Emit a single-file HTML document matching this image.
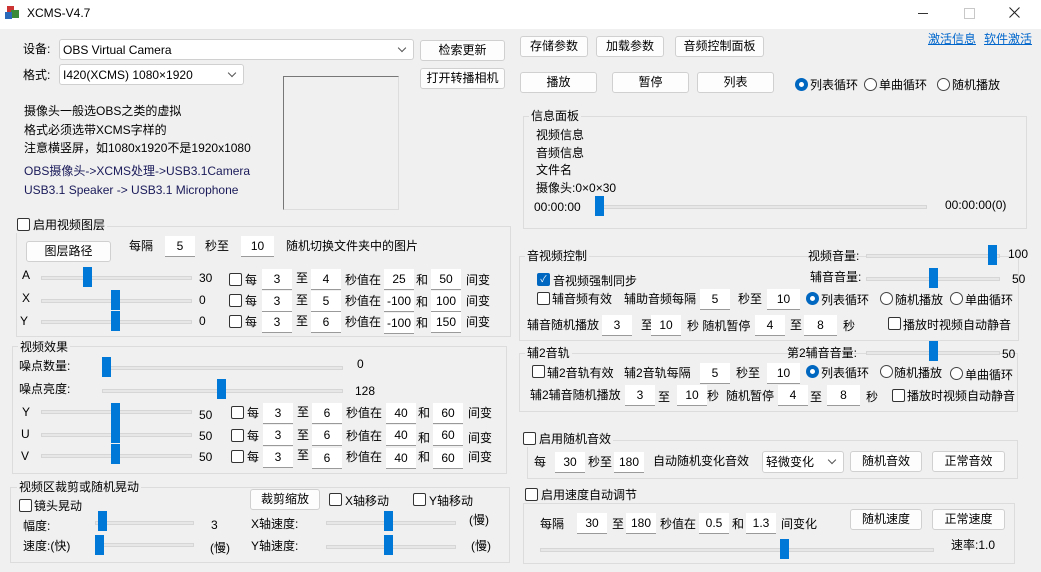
<!DOCTYPE html><html><head><meta charset="utf-8"><style>
body{margin:0;width:1041px;height:572px;background:#f0f0f0;font-family:"Liberation Sans","Noto Sans CJK SC",sans-serif;font-size:12px;color:#000;position:relative;overflow:hidden}
.t{position:absolute;line-height:16px;white-space:nowrap}
.i{position:absolute;background:#fff;border-bottom:1px solid #9a9a9a;height:20px;line-height:21px;text-align:center;width:30px}
.b{position:absolute;background:#fdfdfd;border:1px solid #d0d0d0;border-radius:3px;text-align:center;line-height:19px;height:19px;box-sizing:content-box}
.c{position:absolute;width:11px;height:11px;border:1px solid #333;border-radius:2px;background:#fff}
.r{position:absolute;width:11px;height:11px;border:1px solid #444;border-radius:50%;background:#fff}
.r.on{border:4px solid #0067c0;width:5px;height:5px;background:#fff}
.tr{position:absolute;height:2px;background:#e7e7e7;border:1px solid #d6d6d6}
.th{position:absolute;width:9px;height:20px;background:#0078d7}
.g{position:absolute;border:1px solid #dcdcdc}
.gl{position:absolute;background:#f0f0f0;line-height:16px;padding:0 2px;white-space:nowrap}
.cb{position:absolute;background:#fff;border:1px solid #d0d0d0;border-radius:3px;height:20px;line-height:20px;padding-left:3px;box-sizing:border-box}
.cb:after{content:"";position:absolute;right:8px;top:5px;width:5px;height:5px;border-right:1px solid #555;border-bottom:1px solid #555;transform:rotate(45deg)}
a{color:#0066cc;text-decoration:underline}
</style></head><body>
<div style="position:absolute;left:0;top:0;width:1041px;height:29px;background:#fff"></div>
<div style="position:absolute;left:7px;top:6px;width:7px;height:7px;background:#c33"></div>
<div style="position:absolute;left:11px;top:10px;width:8px;height:8px;background:#3a8a3a"></div>
<div style="position:absolute;left:5px;top:12px;width:7px;height:7px;background:#2a6ab8"></div>
<div class="t" style="left:27px;top:5px;font-size:12px">XCMS-V4.7</div>
<div style="position:absolute;left:918px;top:13px;width:10px;height:1px;background:#333"></div>
<div style="position:absolute;left:964px;top:8px;width:9px;height:9px;border:1px solid #c8c8c8"></div>
<svg style="position:absolute;left:1009px;top:7px" width="11" height="11"><path d="M0.5 0.5L10.5 10.5M10.5 0.5L0.5 10.5" stroke="#222" stroke-width="1"/></svg>

<div class="t" style="left:23px;top:41px">设备:</div>
<div class="cb" style="left:59px;top:39px;width:355px;height:21px">OBS Virtual Camera</div>
<div class="b" style="left:420px;top:40px;width:83px">检索更新</div>
<div class="t" style="left:23px;top:67px">格式:</div>
<div class="cb" style="left:59px;top:64px;width:185px;height:21px">I420(XCMS) 1080×1920</div>
<div class="b" style="left:420px;top:68px;width:83px">打开转播相机</div>
<div style="position:absolute;left:283px;top:76px;width:114px;height:132px;border:1px solid #ddd;border-top-color:#777;border-left-color:#777"></div>
<div class="t" style="left:24px;top:103px">摄像头一般选OBS之类的虚拟</div>
<div class="t" style="left:24px;top:122px">格式必须选带XCMS字样的</div>
<div class="t" style="left:24px;top:140px">注意横竖屏，如1080x1920不是1920x1080</div>
<div class="t" style="left:24px;top:163px;color:#1a1a5a">OBS摄像头-&gt;XCMS处理-&gt;USB3.1Camera</div>
<div class="t" style="left:24px;top:182px;color:#1a1a5a">USB3.1 Speaker -&gt; USB3.1 Microphone</div>

<div class="g" style="left:16px;top:226px;width:493px;height:109px"></div>
<div class="gl" style="left:15px;top:217px"><span class="c" style="position:relative;display:inline-block;vertical-align:-2px;margin-right:3px"></span>启用视频图层</div>
<div class="b" style="left:26px;top:241px;width:83px">图层路径</div>
<div class="t" style="left:129px;top:238px">每隔</div>
<div class="i" style="left:165px;top:236px">5</div>
<div class="t" style="left:205px;top:238px">秒至</div>
<div class="i" style="left:241px;top:236px;width:33px">10</div>
<div class="t" style="left:286px;top:238px">随机切换文件夹中的图片</div>

<div class="t" style="left:22px;top:267px">A</div>
<div class="tr" style="left:41px;top:276px;width:149px"></div><div class="th" style="left:83px;top:267px"></div>
<div class="t" style="left:199px;top:270px">30</div>
<div class="c" style="left:229px;top:273px"></div><div class="t" style="left:245px;top:272px">每</div>
<div class="i" style="left:262px;top:269px">3</div><div class="t" style="left:296px;top:270px">至</div>
<div class="i" style="left:311px;top:269px">4</div><div class="t" style="left:345px;top:272px">秒值在</div>
<div class="i" style="left:384px;top:269px">25</div><div class="t" style="left:416px;top:272px">和</div>
<div class="i" style="left:431px;top:269px">50</div><div class="t" style="left:466px;top:272px">间变</div>

<div class="t" style="left:22px;top:290px">X</div>
<div class="tr" style="left:41px;top:299px;width:149px"></div><div class="th" style="left:111px;top:290px"></div>
<div class="t" style="left:199px;top:292px">0</div>
<div class="c" style="left:229px;top:294px"></div><div class="t" style="left:245px;top:293px">每</div>
<div class="i" style="left:262px;top:291px">3</div><div class="t" style="left:296px;top:292px">至</div>
<div class="i" style="left:311px;top:291px">5</div><div class="t" style="left:345px;top:293px">秒值在</div>
<div class="i" style="left:384px;top:291px">-100</div><div class="t" style="left:416px;top:294px">和</div>
<div class="i" style="left:431px;top:291px">100</div><div class="t" style="left:466px;top:293px">间变</div>

<div class="t" style="left:20px;top:313px">Y</div>
<div class="tr" style="left:41px;top:320px;width:149px"></div><div class="th" style="left:111px;top:311px"></div>
<div class="t" style="left:199px;top:313px">0</div>
<div class="c" style="left:229px;top:315px"></div><div class="t" style="left:245px;top:314px">每</div>
<div class="i" style="left:262px;top:312px">3</div><div class="t" style="left:296px;top:313px">至</div>
<div class="i" style="left:311px;top:312px">6</div><div class="t" style="left:345px;top:314px">秒值在</div>
<div class="i" style="left:384px;top:313px">-100</div><div class="t" style="left:416px;top:315px">和</div>
<div class="i" style="left:431px;top:312px">150</div><div class="t" style="left:466px;top:314px">间变</div>

<div class="g" style="left:12px;top:346px;width:493px;height:126px"></div>
<div class="gl" style="left:18px;top:339px">视频效果</div>
<div class="t" style="left:19px;top:358px">噪点数量:</div>
<div class="tr" style="left:102px;top:366px;width:239px"></div><div class="th" style="left:102px;top:357px"></div>
<div class="t" style="left:357px;top:356px">0</div>
<div class="t" style="left:19px;top:381px">噪点亮度:</div>
<div class="tr" style="left:102px;top:389px;width:239px"></div><div class="th" style="left:217px;top:379px"></div>
<div class="t" style="left:355px;top:383px">128</div>

<div class="t" style="left:22px;top:404px">Y</div>
<div class="tr" style="left:41px;top:410px;width:149px"></div><div class="th" style="left:111px;top:403px"></div>
<div class="t" style="left:199px;top:407px">50</div>
<div class="c" style="left:231px;top:406px"></div><div class="t" style="left:247px;top:405px">每</div>
<div class="i" style="left:263px;top:403px">3</div><div class="t" style="left:297px;top:404px">至</div>
<div class="i" style="left:312px;top:403px">6</div><div class="t" style="left:346px;top:405px">秒值在</div>
<div class="i" style="left:386px;top:403px">40</div><div class="t" style="left:418px;top:405px">和</div>
<div class="i" style="left:433px;top:403px">60</div><div class="t" style="left:468px;top:405px">间变</div>

<div class="t" style="left:21px;top:426px">U</div>
<div class="tr" style="left:41px;top:433px;width:149px"></div><div class="th" style="left:111px;top:423px"></div>
<div class="t" style="left:199px;top:428px">50</div>
<div class="c" style="left:231px;top:429px"></div><div class="t" style="left:247px;top:428px">每</div>
<div class="i" style="left:263px;top:425px">3</div><div class="t" style="left:297px;top:427px">至</div>
<div class="i" style="left:312px;top:425px">6</div><div class="t" style="left:346px;top:428px">秒值在</div>
<div class="i" style="left:386px;top:425px">40</div><div class="t" style="left:418px;top:430px">和</div>
<div class="i" style="left:433px;top:425px">60</div><div class="t" style="left:468px;top:430px">间变</div>

<div class="t" style="left:21px;top:448px">V</div>
<div class="tr" style="left:41px;top:454px;width:149px"></div><div class="th" style="left:111px;top:444px"></div>
<div class="t" style="left:199px;top:449px">50</div>
<div class="c" style="left:231px;top:450px"></div><div class="t" style="left:247px;top:449px">每</div>
<div class="i" style="left:263px;top:447px">3</div><div class="t" style="left:297px;top:447px">至</div>
<div class="i" style="left:312px;top:448px">6</div><div class="t" style="left:346px;top:449px">秒值在</div>
<div class="i" style="left:386px;top:448px">40</div><div class="t" style="left:418px;top:449px">和</div>
<div class="i" style="left:433px;top:448px">60</div><div class="t" style="left:468px;top:449px">间变</div>

<div class="g" style="left:10px;top:487px;width:498px;height:74px"></div>
<div class="gl" style="left:17px;top:479px">视频区裁剪或随机晃动</div>
<div class="c" style="left:19px;top:499px"></div><div class="t" style="left:34px;top:498px">镜头晃动</div>
<div class="t" style="left:23px;top:518px">幅度:</div>
<div class="tr" style="left:95px;top:521px;width:97px"></div><div class="th" style="left:98px;top:511px"></div>
<div class="t" style="left:211px;top:517px">3</div>
<div class="t" style="left:23px;top:538px">速度:(快)</div>
<div class="tr" style="left:95px;top:543px;width:97px"></div><div class="th" style="left:95px;top:535px"></div>
<div class="t" style="left:210px;top:540px">(慢)</div>
<div class="b" style="left:250px;top:489px;width:68px">裁剪缩放</div>
<div class="c" style="left:329px;top:493px"></div><div class="t" style="left:345px;top:493px">X轴移动</div>
<div class="c" style="left:413px;top:493px"></div><div class="t" style="left:429px;top:493px">Y轴移动</div>
<div class="t" style="left:251px;top:516px">X轴速度:</div>
<div class="tr" style="left:326px;top:521px;width:128px"></div><div class="th" style="left:384px;top:511px"></div>
<div class="t" style="left:469px;top:512px">(慢)</div>
<div class="t" style="left:251px;top:538px">Y轴速度:</div>
<div class="tr" style="left:326px;top:545px;width:128px"></div><div class="th" style="left:384px;top:535px"></div>
<div class="t" style="left:471px;top:538px">(慢)</div>

<div class="b" style="left:520px;top:36px;width:66px">存储参数</div>
<div class="b" style="left:596px;top:36px;width:66px">加载参数</div>
<div class="b" style="left:675px;top:36px;width:87px">音频控制面板</div>
<div class="t" style="left:928px;top:31px"><a>激活信息</a></div>
<div class="t" style="left:984px;top:31px"><a>软件激活</a></div>
<div class="b" style="left:520px;top:72px;width:75px">播放</div>
<div class="b" style="left:612px;top:72px;width:75px">暂停</div>
<div class="b" style="left:697px;top:72px;width:75px">列表</div>
<div class="r on" style="left:795px;top:78px"></div><div class="t" style="left:810px;top:77px">列表循环</div>
<div class="r" style="left:864px;top:78px"></div><div class="t" style="left:879px;top:77px">单曲循环</div>
<div class="r" style="left:937px;top:78px"></div><div class="t" style="left:952px;top:77px">随机播放</div>

<div class="g" style="left:523px;top:116px;width:502px;height:111px"></div>
<div class="gl" style="left:529px;top:108px">信息面板</div>
<div class="t" style="left:536px;top:127px">视频信息</div>
<div class="t" style="left:536px;top:145px">音频信息</div>
<div class="t" style="left:536px;top:162px">文件名</div>
<div class="t" style="left:536px;top:180px">摄像头:0×0×30</div>
<div class="t" style="left:534px;top:199px">00:00:00</div>
<div class="tr" style="left:595px;top:205px;width:330px"></div><div class="th" style="left:595px;top:196px"></div>
<div class="t" style="left:945px;top:197px">00:00:00(0)</div>

<div class="g" style="left:519px;top:256px;width:498px;height:83px"></div>
<div class="gl" style="left:525px;top:248px">音视频控制</div>
<div class="t" style="left:808px;top:248px">视频音量:</div>
<div class="tr" style="left:866px;top:254px;width:132px"></div><div class="th" style="left:988px;top:245px"></div>
<div class="t" style="left:1008px;top:246px">100</div>
<div class="c" style="left:537px;top:273px;background:#0067c0;border-color:#0067c0;color:#fff;font-size:9px;line-height:11px;text-align:center">✓</div>
<div class="t" style="left:553px;top:273px">音视频强制同步</div>
<div class="t" style="left:810px;top:269px">辅音音量:</div>
<div class="tr" style="left:866px;top:277px;width:132px"></div><div class="th" style="left:929px;top:268px"></div>
<div class="t" style="left:1012px;top:271px">50</div>

<div class="c" style="left:537px;top:292px"></div><div class="t" style="left:552px;top:291px">辅音频有效</div>
<div class="t" style="left:624px;top:291px">辅助音频每隔</div>
<div class="i" style="left:700px;top:289px">5</div><div class="t" style="left:738px;top:291px">秒至</div>
<div class="i" style="left:767px;top:289px;width:33px">10</div>
<div class="r on" style="left:806px;top:292px"></div><div class="t" style="left:821px;top:292px">列表循环</div>
<div class="r" style="left:880px;top:292px"></div><div class="t" style="left:895px;top:292px">随机播放</div>
<div class="r" style="left:950px;top:292px"></div><div class="t" style="left:965px;top:292px">单曲循环</div>

<div class="t" style="left:527px;top:317px">辅音随机播放</div>
<div class="i" style="left:602px;top:315px">3</div><div class="t" style="left:641px;top:317px">至</div>
<div class="i" style="left:651px;top:315px">10</div><div class="t" style="left:687px;top:318px">秒 随机暂停</div>
<div class="i" style="left:755px;top:315px">4</div><div class="t" style="left:790px;top:317px">至</div>
<div class="i" style="left:804px;top:315px;width:33px">8</div><div class="t" style="left:843px;top:318px">秒</div>
<div class="c" style="left:888px;top:317px"></div><div class="t" style="left:903px;top:317px">播放时视频自动静音</div>

<div class="g" style="left:519px;top:353px;width:497px;height:57px"></div>
<div class="gl" style="left:525px;top:345px">辅2音轨</div>
<div class="t" style="left:787px;top:345px">第2辅音音量:</div>
<div class="tr" style="left:866px;top:351px;width:132px"></div><div class="th" style="left:929px;top:341px"></div>
<div class="t" style="left:1002px;top:346px">50</div>
<div class="c" style="left:532px;top:365px"></div><div class="t" style="left:547px;top:365px">辅2音轨有效</div>
<div class="t" style="left:624px;top:365px">辅2音轨每隔</div>
<div class="i" style="left:700px;top:363px">5</div><div class="t" style="left:736px;top:365px">秒至</div>
<div class="i" style="left:767px;top:363px;width:33px">10</div>
<div class="r on" style="left:806px;top:365px"></div><div class="t" style="left:821px;top:365px">列表循环</div>
<div class="r" style="left:880px;top:365px"></div><div class="t" style="left:894px;top:365px">随机播放</div>
<div class="r" style="left:950px;top:367px"></div><div class="t" style="left:965px;top:367px">单曲循环</div>
<div class="t" style="left:530px;top:387px">辅2辅音随机播放</div>
<div class="i" style="left:625px;top:385px">3</div><div class="t" style="left:658px;top:389px">至</div>
<div class="i" style="left:677px;top:385px">10</div><div class="t" style="left:707px;top:388px">秒</div>
<div class="t" style="left:726px;top:388px">随机暂停</div>
<div class="i" style="left:778px;top:385px">4</div><div class="t" style="left:810px;top:389px">至</div>
<div class="i" style="left:827px;top:385px;width:33px">8</div><div class="t" style="left:866px;top:389px">秒</div>
<div class="c" style="left:892px;top:389px"></div><div class="t" style="left:907px;top:388px">播放时视频自动静音</div>

<div class="g" style="left:527px;top:440px;width:489px;height:37px"></div>
<div class="gl" style="left:521px;top:431px"><span class="c" style="position:relative;display:inline-block;vertical-align:-2px;margin-right:3px"></span>启用随机音效</div>
<div class="t" style="left:534px;top:454px">每</div>
<div class="i" style="left:555px;top:452px">30</div><div class="t" style="left:588px;top:454px">秒至</div>
<div class="i" style="left:614px;top:452px">180</div><div class="t" style="left:653px;top:453px">自动随机变化音效</div>
<div class="cb" style="left:762px;top:451px;width:82px;height:22px">轻微变化</div>
<div class="b" style="left:850px;top:451px;width:70px">随机音效</div>
<div class="b" style="left:932px;top:451px;width:71px">正常音效</div>

<div class="g" style="left:523px;top:503px;width:490px;height:59px"></div>
<div class="gl" style="left:523px;top:487px"><span class="c" style="position:relative;display:inline-block;vertical-align:-2px;margin-right:3px"></span>启用速度自动调节</div>
<div class="t" style="left:540px;top:516px">每隔</div>
<div class="i" style="left:577px;top:513px">30</div><div class="t" style="left:612px;top:516px">至</div>
<div class="i" style="left:626px;top:513px">180</div><div class="t" style="left:660px;top:516px">秒值在</div>
<div class="i" style="left:699px;top:513px">0.5</div><div class="t" style="left:732px;top:516px">和</div>
<div class="i" style="left:746px;top:513px">1.3</div><div class="t" style="left:781px;top:516px">间变化</div>
<div class="b" style="left:850px;top:509px;width:70px">随机速度</div>
<div class="b" style="left:932px;top:509px;width:71px">正常速度</div>
<div class="tr" style="left:540px;top:548px;width:392px"></div><div class="th" style="left:780px;top:539px"></div>
<div class="t" style="left:951px;top:537px">速率:1.0</div>
</body></html>
